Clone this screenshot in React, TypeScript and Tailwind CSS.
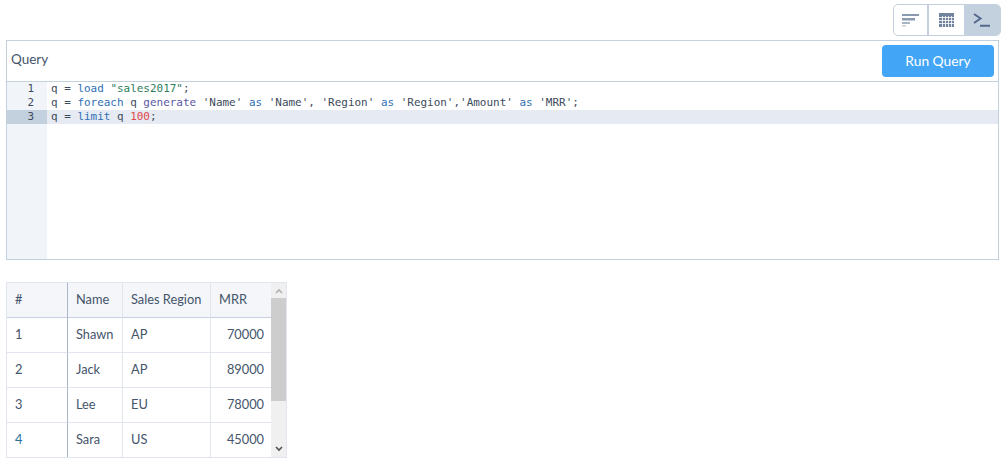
import React from 'react';

const rows = [
  { id: '1', name: 'Shawn', region: 'AP', mrr: '70000' },
  { id: '2', name: 'Jack', region: 'AP', mrr: '89000' },
  { id: '3', name: 'Lee', region: 'EU', mrr: '78000' },
  { id: '4', name: 'Sara', region: 'US', mrr: '45000' },
];

function Kw({ children }: { children: React.ReactNode }) {
  return <span className="text-[#2f6fb5]">{children}</span>;
}

function Str({ children }: { children: React.ReactNode }) {
  return <span className="text-[#3c4a5c]">{children}</span>;
}

function Toolbar() {
  return (
    <div className="flex justify-end h-[40px] pt-[4px] pr-[7px]">
      <div className="flex h-[32px] w-[108px] rounded-[5px] border border-[#c3d0de] overflow-hidden bg-white">
        <button className="w-[35px] flex items-center justify-center border-r-2 border-[#c3d0de]">
          <svg width="18" height="14" viewBox="0 0 18 14">
            <rect x="0" y="1" width="17" height="2" fill="#8a9bb0" />
            <rect x="0" y="5" width="13" height="2.5" fill="#8a9bb0" />
            <rect x="0" y="9" width="8" height="2" fill="#a8b5c5" />
            <rect x="0" y="12" width="4" height="1.5" fill="#c3ccd8" />
          </svg>
        </button>
        <button className="w-[35px] flex items-center justify-center">
          <svg width="15" height="14" viewBox="0 0 15 14">
            <rect x="0" y="0" width="15" height="14" fill="#71849b" />
            <path d="M0 4.5h15M0 7.5h15M0 10.5h15M3.5 3v11M6.5 3v11M9.5 3v11M12.5 3v11" stroke="#fff" strokeWidth="1" strokeOpacity="0.8" />
          </svg>
        </button>
        <button className="flex-1 bg-[#c3d0de] flex items-center justify-center">
          <svg width="18" height="14" viewBox="0 0 18 14" fill="none">
            <path d="M1 1l6.5 4.5-6.5 4.5" stroke="#54698d" strokeWidth="2" />
            <path d="M7 12.8h10" stroke="#54698d" strokeWidth="2" />
          </svg>
        </button>
      </div>
    </div>
  );
}

function Editor() {
  return (
    <div className="mx-[6px] w-[993px] h-[220px] border border-[#c3d0de] flex flex-col">
      <div className="h-[41px] flex items-center justify-between pl-[4px] pr-[4px] border-b border-[#c3d0de]">
        <span className="text-[13.5px] text-[#44546a] pb-[4px]">Query</span>
        <button className="w-[112px] h-[32px] rounded-[4px] bg-[#42a5f5] text-white text-[13.8px]">Run Query</button>
      </div>
      <div className="flex-1 flex font-['DejaVu_Sans_Mono',monospace] text-[10.96px] leading-[14px] text-[#3c4a5c]">
        <div className="w-[40px] bg-[#f1f5fa] text-right">
          <div className="pr-[13px]">1</div>
          <div className="pr-[13px]">2</div>
          <div className="pr-[13px] bg-[#c3d0de]">3</div>
        </div>
        <div className="flex-1">
          <div className="pl-[4px] whitespace-pre">
            q = <Kw>load</Kw> <span className="text-[#2e7d5b]">"sales2017"</span>;
          </div>
          <div className="pl-[4px] whitespace-pre">
            q = <Kw>foreach</Kw> q <span className="text-[#5b57a6]">generate</span> <Str>'Name'</Str> <Kw>as</Kw> <Str>'Name'</Str>, <Str>'Region'</Str> <Kw>as</Kw> <Str>'Region'</Str>,<Str>'Amount'</Str> <Kw>as</Kw> <Str>'MRR'</Str>;
          </div>
          <div className="pl-[4px] whitespace-pre bg-[#e6eaf2]">
            q = <Kw>limit</Kw> q <span className="text-[#e0474c]">100</span>;
          </div>
        </div>
      </div>
    </div>
  );
}

function ResultTable() {
  return (
    <div className="mt-[22px] ml-[6px] w-[281px] h-[176px] border border-[#e0e5ee] flex overflow-hidden">
      <table className="w-[264px] h-[174px] border-separate border-spacing-0 table-fixed text-[12.8px] text-[#44546a]">
        <colgroup>
          <col className="w-[61px]" />
          <col className="w-[55px]" />
          <col className="w-[88px]" />
          <col className="w-[60px]" />
        </colgroup>
        <thead>
          <tr className="h-[35px] bg-[#f4f6f9]">
            <th className="font-normal text-left pl-[8px] border-r border-b border-r-[#a8b5cb] border-b-[#c3d0de]">#</th>
            <th className="font-normal text-left pl-[8px] border-r border-b border-r-[#e0e5ee] border-b-[#c3d0de]">Name</th>
            <th className="font-normal text-left pl-[8px] border-r border-b border-r-[#e0e5ee] border-b-[#c3d0de]">Sales Region</th>
            <th className="font-normal text-left pl-[8px] border-b border-b-[#c3d0de]">MRR</th>
          </tr>
        </thead>
        <tbody>
          {rows.map((row, i) => {
            const last = i === rows.length - 1;
            return (
              <tr key={row.id} className={last ? 'h-[34px]' : 'h-[35px]'}>
                <td className={`pl-[8px] border-r border-r-[#a8b5cb] ${last ? 'text-[#2a6f97]' : 'border-b border-b-[#e0e5ee]'}`}>{row.id}</td>
                <td className={`pl-[8px] border-r border-r-[#e0e5ee] ${last ? '' : 'border-b border-b-[#e0e5ee]'}`}>{row.name}</td>
                <td className={`pl-[8px] border-r border-r-[#e0e5ee] ${last ? '' : 'border-b border-b-[#e0e5ee]'}`}>{row.region}</td>
                <td className={`pr-[7px] text-right ${last ? '' : 'border-b border-b-[#e0e5ee]'}`}>{row.mrr}</td>
              </tr>
            );
          })}
        </tbody>
      </table>
      <div className="w-[15px] bg-[#f0f0f0] flex flex-col">
        <div className="h-[15px] flex items-center justify-center">
          <svg width="8" height="6" viewBox="0 0 8 6" fill="none">
            <path d="M1 5l3-3 3 3" stroke="#b0b0b0" strokeWidth="1.6" />
          </svg>
        </div>
        <div className="h-[103px] bg-[#cdcdcd]" />
        <div className="flex-1 flex items-end justify-center pb-[5px]">
          <svg width="8" height="6" viewBox="0 0 8 6" fill="none">
            <path d="M1 1l3 3 3-3" stroke="#505050" strokeWidth="1.6" />
          </svg>
        </div>
      </div>
    </div>
  );
}

export default function App() {
  return (
    <div className="w-[1008px] h-[463px] bg-white overflow-hidden font-['Lato',sans-serif]">
      <Toolbar />
      <Editor />
      <ResultTable />
    </div>
  );
}
